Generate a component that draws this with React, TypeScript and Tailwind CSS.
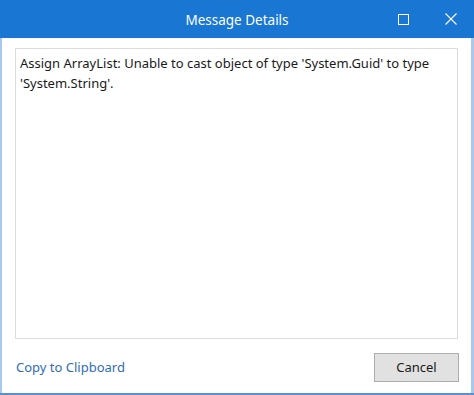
import React from 'react'

export default function App() {
    return (
        <div
            className="w-[474px] h-[395px] flex flex-col bg-[#a8c8ec] pl-[2px] pr-[3px] border-b-[2px] border-[#5a90d2]"
            style={{ fontFamily: '"Noto Sans", "Open Sans", sans-serif' }}
        >
            <div className="h-[38px] shrink-0 flex items-center relative bg-[#1976d3] -ml-[2px] -mr-[3px] pt-[3px]">
                <div className="flex-1 text-center text-white text-[13.5px]">
                    Message Details
                </div>
                <div className="absolute right-0 top-0 h-full flex items-center">
                    <div className="w-[47px] h-full flex items-center justify-center">
                        <div className="w-[11px] h-[11px] border border-white" />
                    </div>
                    <div className="w-[47px] h-full flex items-center justify-center">
                        <svg width="12" height="12" viewBox="0 0 12 12">
                            <path d="M0.5 0.5L11.5 11.5M11.5 0.5L0.5 11.5" stroke="white" strokeWidth="1.1" />
                        </svg>
                    </div>
                </div>
            </div>
            <div className="flex-1 flex flex-col bg-white">
                <div className="mx-[13px] mt-[10px] h-[291px] border border-[#dcdcdc] px-[4px] py-[4px] text-[13px] leading-[20px] text-[#1a1a1a]">
                    Assign ArrayList: Unable to cast object of type 'System.Guid' to type 'System.String'.
                </div>
                <div className="flex items-center justify-between pl-[14px] pr-[12px] mt-[14px]">
                    <span className="text-[13px] text-[#2f6db5]">Copy to Clipboard</span>
                    <button className="w-[85px] h-[29px] bg-[#e1e1e1] border border-[#adadad] text-[13px] text-[#1a1a1a]">
                        Cancel
                    </button>
                </div>
            </div>
        </div>
    )
}
